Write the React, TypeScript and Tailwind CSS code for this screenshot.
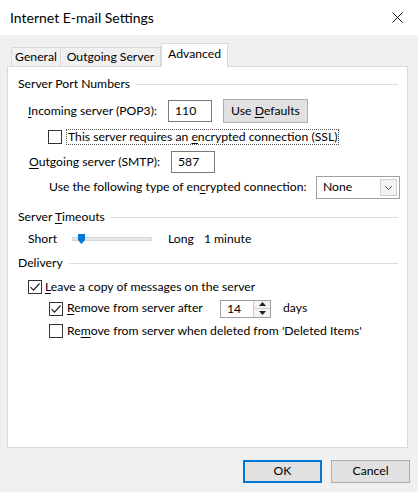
import React from "react";

const U = ({ c }: { c: string }) => <span className="underline underline-offset-[2px] decoration-[1px]">{c}</span>;

function Check({ checked }: { checked?: boolean }) {
  return (
    <div className="w-[14px] h-[14px] border border-[#333333] bg-white flex items-center justify-center shrink-0">
      {checked && (
        <svg width="12" height="12" viewBox="0 0 12 12">
          <path d="M1.5 6.2 L4.5 9.2 L10.5 2.5" fill="none" stroke="#222" strokeWidth="1.2" />
        </svg>
      )}
    </div>
  );
}

function Group({ title, className }: { title: React.ReactNode; className?: string }) {
  return (
    <div className={"flex items-center h-[16px] pl-[10px] pr-[9px] " + (className || "")}>
      <span className="whitespace-nowrap">{title}</span>
      <div className="flex-1 h-px bg-[#dcdcdc] ml-[6px]" />
    </div>
  );
}

export default function App() {
  return (
    <div className="w-[418px] h-[492px] bg-[#f0f0f0] flex flex-col font-['Lato',sans-serif] text-[12.2px] text-black leading-none whitespace-nowrap">
      <div className="h-[35px] bg-white flex items-center justify-between pl-[10px] pr-[15px] shrink-0">
        <span className="text-[14px]">Internet E-mail Settings</span>
        <svg width="11" height="11" viewBox="0 0 11 11">
          <path d="M0.5 0.5 L10.5 10.5 M10.5 0.5 L0.5 10.5" stroke="#111" strokeWidth="1" />
        </svg>
      </div>

      <div className="pl-[7px] pr-[10px] pt-[8px] flex flex-col">
        <div className="flex items-end h-[23px] pl-[4px] relative z-10">
          <div className="h-[19px] w-[50px] border border-[#d9d9d9] border-b-0 bg-[#f0f0f0] flex items-center justify-center">General</div>
          <div className="h-[19px] w-[100px] border border-[#d9d9d9] border-b-0 border-l-0 bg-[#f0f0f0] flex items-center justify-center">Outgoing Server</div>
          <div className="h-[24px] w-[67px] border border-[#d9d9d9] border-b-0 bg-white flex items-center justify-center mb-[-1px] pb-[2px]">Advanced</div>
        </div>

        <div className="h-[382px] border border-[#d9d9d9] bg-white flex flex-col">
          <Group title="Server Port Numbers" className="mt-[9px]" />

          <div className="flex items-center h-[24px] mt-[7px] pl-[20px]">
            <span className="w-[140px]"><U c="I" />ncoming server (POP3):</span>
            <div className="w-[44px] h-[22px] border border-[#7a7a7a] flex items-center pl-[6px]">110</div>
            <div className="ml-[11px] w-[85px] h-[24px] border border-[#adadad] bg-[#e1e1e1] flex items-center justify-center">
              Use&nbsp;<U c="D" />efaults
            </div>
          </div>

          <div className="flex items-center h-[16px] mt-[6px] pl-[40px]">
            <Check />
            <span className="ml-[4px] h-[16px] flex items-center border border-dotted border-[#555] px-[1px]">
              This server requires an&nbsp;<U c="e" />ncrypted connection (SSL)
            </span>
          </div>

          <div className="flex items-center h-[22px] mt-[6px] pl-[21px]">
            <span className="w-[142px]"><U c="O" />utgoing server (SMTP):</span>
            <div className="w-[44px] h-[22px] border border-[#7a7a7a] flex items-center pl-[6px]">587</div>
          </div>

          <div className="flex items-center h-[23px] mt-[3px] pl-[41px]">
            <span className="w-[267px]">Use the following type of en<U c="c" />rypted connection:</span>
            <div className="w-[84px] h-[23px] border border-[#a0a0a0] flex items-center justify-between pl-[6px] pr-[2px]">
              <span>None</span>
              <div className="w-[17px] h-[17px] border border-[#cfcfcf] bg-[#f3f3f3] flex items-center justify-center">
                <svg width="9" height="6" viewBox="0 0 9 6">
                  <path d="M1 1 L4.5 4.5 L8 1" fill="none" stroke="#555" strokeWidth="1" />
                </svg>
              </div>
            </div>
          </div>

          <Group title={<>Server <U c="T" />imeouts</>} className="mt-[10px]" />

          <div className="flex items-center h-[16px] mt-[6px] pl-[20px]">
            <span className="w-[44px]">Short</span>
            <div className="relative w-[80px] h-[4px] bg-[#e7e7e7] border border-[#d6d6d6]">
              <svg className="absolute left-[5px] top-[-4px]" width="7" height="10" viewBox="0 0 7 10">
                <path d="M0 0 H7 V6 L3.5 10 L0 6 Z" fill="#0078d7" />
              </svg>
            </div>
            <span className="ml-[16px]">Long</span>
            <span className="ml-[10px]">1 minute</span>
          </div>

          <Group title="Delivery" className="mt-[8px]" />

          <div className="flex items-center h-[16px] mt-[8px] pl-[20px]">
            <Check checked />
            <span className="ml-[3px]"><U c="L" />eave a copy of messages on the server</span>
          </div>

          <div className="flex items-center h-[17px] mt-[5px] pl-[41px]">
            <Check checked />
            <span className="ml-[4px] w-[153px]"><U c="R" />emove from server after</span>
            <div className="w-[51px] h-[18px] border border-[#a0a0a0] flex items-stretch">
              <span className="flex-1 flex items-center pl-[6px] pt-[2px]">14</span>
              <div className="w-[17px] flex flex-col border-l border-[#d0d0d0] bg-[#f3f3f3]">
                <div className="flex-1 flex items-center justify-center border-b border-[#d0d0d0]">
                  <svg width="7" height="4" viewBox="0 0 7 4"><path d="M0 4 L3.5 0 L7 4 Z" fill="#222" /></svg>
                </div>
                <div className="flex-1 flex items-center justify-center">
                  <svg width="7" height="4" viewBox="0 0 7 4"><path d="M0 0 L3.5 4 L7 0 Z" fill="#222" /></svg>
                </div>
              </div>
            </div>
            <span className="ml-[12px]">days</span>
          </div>

          <div className="flex items-center h-[16px] mt-[6px] pl-[41px]">
            <Check />
            <span className="ml-[4px]">Re<U c="m" />ove from server when deleted from 'Deleted Items'</span>
          </div>
        </div>
      </div>

      <div className="flex justify-end gap-[9px] pr-[8px] mt-[12px]">
        <div className="w-[79px] h-[23px] border-2 border-[#0078d7] bg-[#e1e1e1] flex items-center justify-center">OK</div>
        <div className="w-[79px] h-[23px] border border-[#adadad] bg-[#e1e1e1] flex items-center justify-center">Cancel</div>
      </div>
    </div>
  );
}
